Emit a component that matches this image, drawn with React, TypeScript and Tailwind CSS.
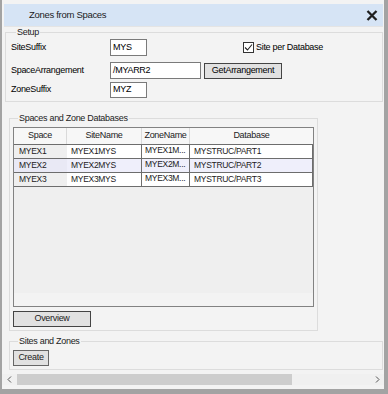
import React from "react";

const rows = [
  { space: "MYEX1", site: "MYEX1MYS", zone: "MYEX1M...", db: "MYSTRUC/PART1", alt: false },
  { space: "MYEX2", site: "MYEX2MYS", zone: "MYEX2M...", db: "MYSTRUC/PART2", alt: true },
  { space: "MYEX3", site: "MYEX3MYS", zone: "MYEX3M...", db: "MYSTRUC/PART3", alt: false },
];

function Field({ value, w, h = 17 }: { value: string; w: string; h?: number }) {
  return (
    <div
      className={`${w} ${h === 17 ? "h-[17px]" : "h-[16px]"} flex items-center border border-[#7a7a7a] bg-white pl-[2px] text-black`}
    >
      {value}
    </div>
  );
}

export default function App() {
  return (
    <div className="h-[394px] w-[388px] bg-[#a3a3a3] pb-[5px] pl-[2px] pr-[4px] font-['Liberation_Sans',Arial,sans-serif] text-[9px] tracking-[-0.3px] text-black">
      <div className="flex h-[389px] flex-col bg-[#f3f3f3] pt-[4px]">
        {/* title bar */}
        <div className="ml-[2px] mr-[1px] flex h-[23px] items-center justify-between border-b border-[#e4e4e4] bg-[#d6e4f5] pl-[25px] pr-[5px]">
          <span className="text-[9.5px] tracking-[-0.3px] text-[#1b1b1b]">Zones from Spaces</span>
          <svg width="12" height="11" viewBox="0 0 12 11">
            <path d="M1.5 1 L10.5 10 M10.5 1 L1.5 10" stroke="#1f1f1f" strokeWidth="2.3" />
          </svg>
        </div>

        {/* Setup */}
        <fieldset className="ml-[3px] mr-[1px] -mt-[1px] border border-[#dcdcdc] pb-[3px] pl-[5px] pt-[1px]">
          <legend className="ml-[5px] px-[1px] leading-[12px] text-[#222]">Setup</legend>
          <div className="flex h-[17px] items-center">
            <span className="w-[99px]">SiteSuffix</span>
            <Field value="MYS" w="w-[37px]" />
            <div className="ml-[96px] flex items-center">
              <div className="flex h-[11px] w-[11px] items-center justify-center border border-[#333] bg-white">
                <svg width="9" height="9" viewBox="0 0 9 9">
                  <path d="M1 4.5 L3.5 7 L8 1.5" fill="none" stroke="#222" strokeWidth="1.1" />
                </svg>
              </div>
              <span className="ml-[2px]">Site per Database</span>
            </div>
          </div>
          <div className="mt-[6px] flex h-[17px] items-center">
            <span className="w-[99px]">SpaceArrangement</span>
            <Field value="/MYARR2" w="w-[91px]" />
            <button className="ml-[3px] mt-[1px] flex h-[16px] w-[78px] items-center justify-center border border-[#444] bg-[#e1e1e1]">
              GetArrangement
            </button>
          </div>
          <div className="mt-[3px] flex h-[16px] items-center">
            <span className="w-[99px]">ZoneSuffix</span>
            <Field value="MYZ" w="w-[37px]" h={16} />
          </div>
        </fieldset>

        {/* Spaces and Zone Databases */}
        <fieldset className="ml-[7px] mt-[10px] w-[309px] border border-[#dcdcdc] pb-[3px] pl-[3px] pt-[3px]">
          <legend className="ml-[5px] px-[1px] leading-[12px] text-[#222]">Spaces and Zone Databases</legend>
          <div className="flex h-[180px] w-[301px] flex-col border border-[#828282] bg-[#efefef] text-[8.5px] text-[#221a22]">
            <div className="flex h-[17px] border-b border-[#6d6d6d] bg-[#f7f7f7] text-[9px] text-[#222]">
              <div className="flex w-[53px] items-center justify-center border-r border-[#dadada]">Space</div>
              <div className="flex w-[75px] items-center justify-center border-r border-[#dadada]">SiteName</div>
              <div className="flex w-[48px] items-center justify-center border-r border-[#dadada]">ZoneName</div>
              <div className="flex flex-1 items-center justify-center">Database</div>
            </div>
            {rows.map((r) => (
              <div key={r.space} className="flex h-[14px] border-b border-[#6d6d6d]">
                <div className={`flex w-[53px] items-center pl-[5px] ${r.alt ? "bg-[#e9e9f5]" : "bg-[#efefef]"}`}>
                  {r.space}
                </div>
                <div className={`flex w-[75px] items-center border-r border-[#6d6d6d] pl-[4px] ${r.alt ? "bg-[#efeffb]" : "bg-white"}`}>
                  {r.site}
                </div>
                <div className={`flex w-[48px] items-start border-r border-[#6d6d6d] pl-[3px] leading-[11px] ${r.alt ? "bg-[#efeffb]" : "bg-white"}`}>
                  {r.zone}
                </div>
                <div className={`flex flex-1 items-center border-r border-[#6d6d6d] pl-[4px] ${r.alt ? "bg-[#efeffb]" : "bg-white"}`}>
                  {r.db}
                </div>
              </div>
            ))}
            <div className="flex-1" />
            <div className="h-[13px] bg-[#f3f3f3]" />
          </div>
          <button className="mt-[4px] flex h-[16px] w-[78px] items-center justify-center border border-[#444] bg-[#e1e1e1] text-[#222]">
            Overview
          </button>
        </fieldset>

        {/* Sites and Zones */}
        <fieldset className="ml-[7px] mr-[1px] mt-[4px] border border-[#dcdcdc] pb-[3px] pl-[3px] pt-[3px]">
          <legend className="ml-[5px] px-[1px] leading-[12px] text-[#222]">Sites and Zones</legend>
          <button className="flex h-[16px] w-[36px] items-center justify-center border border-[#666] bg-[#e1e1e1] text-[#222]">
            Create
          </button>
        </fieldset>

        {/* horizontal scrollbar */}
        <div className="mt-[4px] flex h-[11px] items-center bg-[#f0f0f0]">
          <div className="flex w-[15px] items-center justify-center">
            <svg width="5" height="7" viewBox="0 0 5 7">
              <path d="M4 0.5 L1 3.5 L4 6.5" fill="none" stroke="#555" strokeWidth="1" />
            </svg>
          </div>
          <div className="h-[11px] w-[275px] bg-[#cdcdcd]" />
          <div className="flex-1" />
          <div className="flex w-[13px] items-center justify-center">
            <svg width="5" height="7" viewBox="0 0 5 7">
              <path d="M1 0.5 L4 3.5 L1 6.5" fill="none" stroke="#555" strokeWidth="1" />
            </svg>
          </div>
        </div>
      </div>
    </div>
  );
}
